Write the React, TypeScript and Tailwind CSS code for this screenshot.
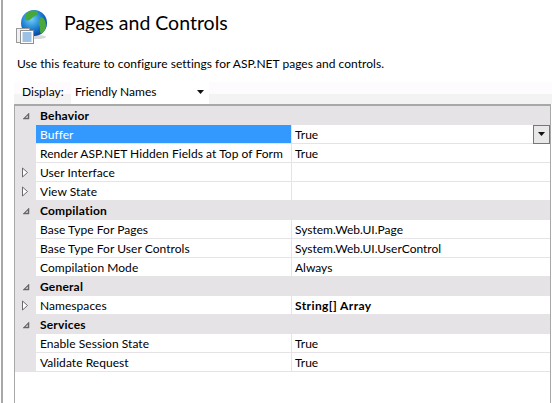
const FONT = "font-['Lato',sans-serif]";

type Row = { label: string; value?: string; bold?: boolean; expand?: boolean; selected?: boolean };
type Section = { title: string; rows: Row[] };

const sections: Section[] = [
  {
    title: "Behavior",
    rows: [
      { label: "Buffer", value: "True", selected: true },
      { label: "Render ASP.NET Hidden Fields at Top of Form", value: "True" },
      { label: "User Interface", expand: true },
      { label: "View State", expand: true },
    ],
  },
  {
    title: "Compilation",
    rows: [
      { label: "Base Type For Pages", value: "System.Web.UI.Page" },
      { label: "Base Type For User Controls", value: "System.Web.UI.UserControl" },
      { label: "Compilation Mode", value: "Always" },
    ],
  },
  {
    title: "General",
    rows: [{ label: "Namespaces", value: "String[] Array", bold: true, expand: true }],
  },
  {
    title: "Services",
    rows: [
      { label: "Enable Session State", value: "True" },
      { label: "Validate Request", value: "True" },
    ],
  },
];

function GlobeIcon() {
  return (
    <svg width="32" height="34" viewBox="0 0 32 34" className="shrink-0">
      <defs>
        <radialGradient id="globe" cx="0.4" cy="0.35" r="0.7">
          <stop offset="0" stopColor="#6fd0f5" />
          <stop offset="0.6" stopColor="#1878d0" />
          <stop offset="1" stopColor="#0b3a94" />
        </radialGradient>
      </defs>
      <ellipse cx="20" cy="27" rx="10" ry="2" fill="#d8d8d8" />
      <circle cx="18" cy="13" r="13" fill="url(#globe)" />
      <path d="M11 3 C14 0 19 0 22 2 C22 5 18 6 16 8 C14 10 12 11 10 10 C8 8 9 5 11 3 Z" fill="#46a838" />
      <path d="M25 7 C28 8 30 11 30 15 C30 20 27 23 25 24 C23 21 25 18 23 15 C22 12 23 10 25 7 Z" fill="#4aa83c" />
      <rect x="0.5" y="18.5" width="13" height="14" fill="#f0f0f0" stroke="#9a9a9a" />
      <rect x="4.5" y="20.5" width="13" height="13" fill="#ffffff" stroke="#8f8f8f" />
      <path d="M6.5 23h9M6.5 25h9M6.5 27h9M6.5 29h9M6.5 31h9" stroke="#3d83c8" strokeWidth="1.1" />
    </svg>
  );
}

function GridRow({ row }: { row: Row }) {
  return (
    <div className="flex h-[19px]">
      <div className="flex w-[21px] shrink-0 items-center justify-center bg-[#e6e3e6]">
        {row.expand && (
          <svg width="8" height="11" viewBox="0 0 8 11" className="mr-[1px]">
            <path d="M1.5 1 L6.5 5.5 L1.5 10 Z" fill="#fff" stroke="#6a6a6a" />
          </svg>
        )}
      </div>
      <div
        className={`flex w-[256px] shrink-0 items-center border-b border-r border-[#e6e3e6] pl-[4px] pt-[1px] tracking-[0.05px] ${
          row.selected ? "bg-[#3399ff] text-white" : "bg-white"
        }`}
      >
        <span className="whitespace-nowrap leading-none">{row.label}</span>
      </div>
      <div className="flex min-w-0 flex-1 items-center justify-between border-b border-[#e6e3e6] bg-white pl-[3px]">
        <span className={row.bold ? "pt-[1px] font-bold leading-none tracking-[0.4px]" : "pt-[1px] leading-none"}>
          {row.value}
        </span>
        {row.selected && (
          <div className="flex h-[19px] w-[17px] items-center justify-center border border-[#777] bg-[#e8e8e8]">
            <svg width="7" height="4" viewBox="0 0 7 4">
              <path d="M0 0h7L3.5 4Z" fill="#111" />
            </svg>
          </div>
        )}
      </div>
    </div>
  );
}

export default function App() {
  return (
    <div className={`${FONT} h-[403px] w-[552px] overflow-hidden bg-white text-[12px] text-black`}>
      <div className="ml-[1px] flex h-[403px] flex-col border-l-2 border-[#a8a8a8]">
        <div className="flex h-[46px] items-start pl-[13px] pt-[10px]">
          <GlobeIcon />
          <h1 className="ml-[16px] text-[19.5px] leading-[26px]">Pages and Controls</h1>
        </div>
        <p className="ml-[14px] mt-[10px] leading-[16px] tracking-[0.03px]">
          Use this feature to configure settings for ASP.NET pages and controls.
        </p>
        <div className="ml-[11px] mt-[10px] flex h-[22px] bg-[linear-gradient(#fdfbfd_0%,#fdfbfd_54%,#f3f3f3_56%,#f3f3f3_100%)]">
          <span className="ml-[8px] mt-[2px] w-[49px] leading-[16px]">Display:</span>
          <div className="relative h-[22px] w-[138px] bg-white pl-[4px] pt-[2px] leading-[16px]">
            Friendly Names
            <svg width="7" height="4" viewBox="0 0 7 4" className="absolute right-[5px] top-[8px]">
              <path d="M0 0h7L3.5 4Z" fill="#111" />
            </svg>
          </div>
        </div>
        <div className="ml-[11px] mr-[1px] flex min-h-0 flex-1 flex-col border-l border-r border-t-2 border-[#a8a8a8]">
          {sections.map((s) => (
            <div key={s.title}>
              <div className="flex h-[19px] items-center bg-[#e6e3e6]">
                <div className="flex w-[21px] shrink-0 items-center justify-center">
                  <svg width="8" height="8" viewBox="0 0 8 8">
                    <path d="M7 1 V7 H1 Z" fill="#666" stroke="#666" strokeWidth="0.5" />
                    <path d="M5.8 3.5 V5.8 H3.5 Z" fill="#e6e3e6" />
                  </svg>
                </div>
                <span className="pl-[4px] pt-[1px] font-bold leading-none tracking-[0.2px]">{s.title}</span>
              </div>
              {s.rows.map((r) => (
                <GridRow key={r.label} row={r} />
              ))}
            </div>
          ))}
        </div>
      </div>
    </div>
  );
}
